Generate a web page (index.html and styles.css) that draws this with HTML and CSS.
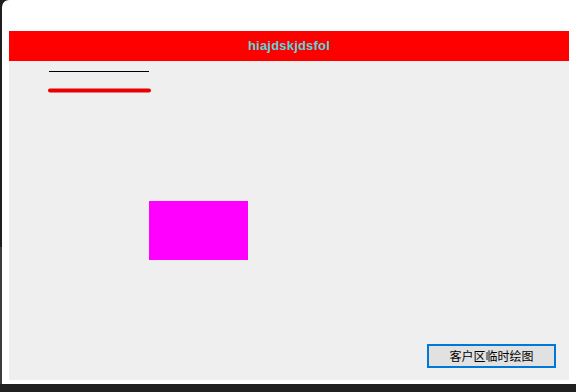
FILE: index.html
```html
<!doctype html>
<html lang="zh">
<head>
    <meta charset="UTF-8">
    <title>client draw</title>
    <link rel="stylesheet" href="styles.css">
</head>
<body>
<div class="window">
    <div class="client">
        <div class="title-bar">hiajdskjdsfol</div>
        <div class="paint-area">
            <svg class="paint-canvas" width="560" height="220" viewBox="0 0 560 220">
                <line x1="40" y1="10.5" x2="140" y2="10.5" stroke="#000" stroke-width="1"/>
                <line x1="41" y1="29.5" x2="140" y2="29.5" stroke="#e80000" stroke-width="4" stroke-linecap="round"/>
                <rect x="140" y="140" width="99" height="59" fill="#ff00ff"/>
            </svg>
            <button class="draw-btn">客户区临时绘图</button>
        </div>
    </div>
</div>
</body>
</html>
```

FILE: styles.css
```css
body {
    margin: 0;
    height: 392px;
    overflow: hidden;
    background: linear-gradient(#1e1e1e 0, #1e1e1e 247px, #3c3c3c 247px, #3c3c3c 384px, #202020 384px);
}
.window {
    margin-left: 2px;
    width: 580px;
    height: 384px;
    box-sizing: border-box;
    padding: 31px 0 0 7px;
    background: #fff;
    border-radius: 7px 7px 0 0;
}
.client {
    width: 560px;
}
.title-bar {
    height: 30px;
    line-height: 30px;
    background: #ff0000;
    color: #55d8de;
    text-align: center;
    font-family: "Liberation Sans", Arial, sans-serif;
    font-weight: bold;
    font-size: 13px;
    letter-spacing: 0.2px;
}
.paint-area {
    display: flex;
    flex-direction: column;
    height: 319px;
    box-sizing: border-box;
    padding: 0 13px 12px 0;
    background: #efefef;
}
.paint-canvas {
    display: block;
}
.draw-btn {
    margin-top: auto;
    align-self: flex-end;
    width: 129px;
    height: 24px;
    padding: 0;
    border: 2px solid #0078d7;
    background: #e1e1e1;
    color: #000;
    font-family: "Noto Sans CJK SC", sans-serif;
    font-size: 12px;
    line-height: 18px;
}
```
